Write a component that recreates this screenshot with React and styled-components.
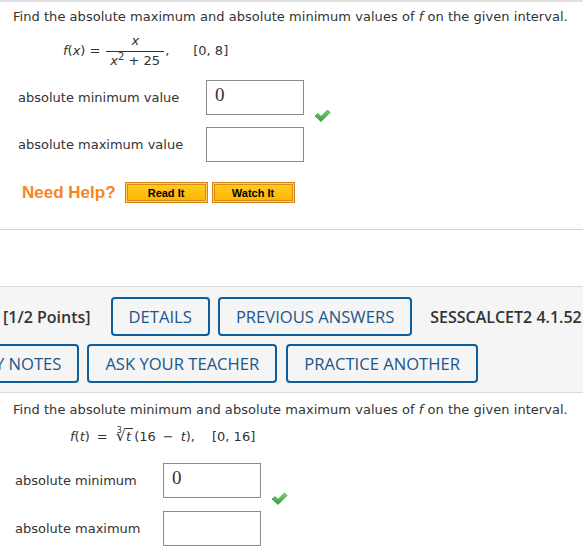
import React from "react";
import styled, { createGlobalStyle } from "styled-components";

const GlobalStyle = createGlobalStyle`
  html, body {
    margin: 0;
    padding: 0;
    background: #fff;
    overflow: hidden;
  }
  body {
    font-family: "DejaVu Sans", Verdana, sans-serif;
    color: #333;
  }
`;

const Page = styled.div`
  width: 583px;
  height: 551px;
  overflow: hidden;
  border-top: 2px solid #e2e2e2;
  box-sizing: border-box;
`;

const Question = styled.section`
  padding: ${(p) => p.pad};
  font-size: 13px;
  line-height: 16px;
  color: #333;
`;

const Prompt = styled.p`
  margin: 0;
  white-space: nowrap;
  letter-spacing: 0.04px;
`;

const Var = styled.i`
  font-family: "DejaVu Sans", Verdana, sans-serif;
  font-style: italic;
`;

const Formula = styled.div`
  margin: ${(p) => p.margin};
  white-space: pre;
  height: ${(p) => p.h}px;
`;

const Op = styled.span`
  padding: 0 ${(p) => p.space}px;
`;

const Fraction = styled.span`
  display: inline-flex;
  flex-direction: column;
  align-items: center;
  vertical-align: middle;
  margin: 0 1px 0 2px;
`;

const Numer = styled.span`
  padding: 0 4px 2px;
  border-bottom: 1px solid #333;
  align-self: stretch;
  text-align: center;
`;

const Denom = styled.span`
  padding: 1px 4px 0;
`;

const Sup = styled.sup`
  font-size: 10px;
  line-height: 0;
`;

const Interval = styled.span`
  margin-left: ${(p) => p.gap}px;
`;

const RootIndex = styled.span`
  font-size: 8px;
  line-height: 0;
  vertical-align: 8px;
  margin: 0 -6px 0 2px;
`;

const Radical = styled.span`
  font-size: 16px;
`;

const Radicand = styled.span`
  display: inline-block;
  border-top: 1px solid #333;
  line-height: 13px;
  padding: 1px 2px 0 1px;
  margin: 0 1px 0 -1px;
`;

const AnswerRow = styled.div`
  display: flex;
  align-items: center;
  margin-top: ${(p) => p.top}px;
  padding-left: ${(p) => p.indent}px;
`;

const Label = styled.label`
  width: ${(p) => p.width}px;
  flex: none;
`;

const AnswerBox = styled.div`
  width: 98px;
  height: 35px;
  box-sizing: border-box;
  border: 1px solid #8a8a8a;
  font-family: "Liberation Serif", "Times New Roman", serif;
  font-size: 19px;
  color: #333;
  padding: 6px 0 0 8px;
`;

const Check = styled.svg`
  align-self: flex-end;
  margin: 0 0 -7px 10px;
`;

const HelpRow = styled.div`
  display: flex;
  align-items: center;
  margin: 20px 0 0 9px;
`;

const HelpTitle = styled.span`
  font-family: "Liberation Sans", Arial, sans-serif;
  font-weight: bold;
  font-size: 17px;
  color: #f7861e;
  margin-right: 9px;
`;

const HelpButton = styled.button`
  width: 83px;
  height: 21px;
  margin-right: 4px;
  padding: 0;
  border: 1px solid #d98410;
  box-shadow: inset 0 0 0 1px #ffd25a, inset 0 0 0 2px #d68e1a;
  background: linear-gradient(#ffcc22, #ffb400);
  font-family: "Liberation Sans", Arial, sans-serif;
  font-weight: bold;
  font-size: 11px;
  color: #000;
`;

const Divider = styled.hr`
  margin: ${(p) => p.top}px 0 0;
  border: 0;
  border-top: 1px solid #d2d2d2;
`;

const Toolbar = styled.div`
  margin-top: 56px;
  background: #f5f5f5;
  border-top: 1px solid #dadada;
  border-bottom: 1px solid #dadada;
  padding: 10px 0 9px;
  display: flex;
  flex-direction: column;
  gap: 8px;
  font-family: "Open Sans", "Noto Sans", sans-serif;
`;

const ToolRow = styled.div`
  display: flex;
  align-items: center;
  margin-left: ${(p) => p.shift}px;
  white-space: nowrap;
`;

const Meta = styled.span`
  font-weight: 600;
  font-size: 16px;
  color: #333;
  margin: 0 ${(p) => p.after}px 0 0;
`;

const ToolButton = styled.button`
  height: ${(p) => p.h}px;
  padding: 0 16px;
  margin-right: ${(p) => p.after}px;
  background: transparent;
  border: 2px solid #0f5e9c;
  border-radius: 4px;
  font-family: "Open Sans", "Noto Sans", sans-serif;
  font-size: 16.6px;
  color: #22558a;
  white-space: nowrap;
`;

const CheckMark = () => (
  <Check width="17" height="13" viewBox="0 0 17 13">
    <defs>
      <linearGradient id="ck" x1="0" y1="0" x2="0" y2="1">
        <stop offset="0" stopColor="#7fd36b" />
        <stop offset="1" stopColor="#2f9e3a" />
      </linearGradient>
    </defs>
    <path
      d="M1 7 L4 4.5 L7 7.5 L13.5 1 L16 3.5 L7 12.5 Z"
      fill="url(#ck)"
      stroke="#3a9a3a"
      strokeWidth="0.8"
      strokeLinejoin="round"
    />
  </Check>
);

export default function App() {
  return (
    <Page>
      <GlobalStyle />
      <Question pad="7px 13px 0">
        <Prompt>
          Find the absolute maximum and absolute minimum values of <Var>f</Var> on the
          given interval.
        </Prompt>
        <Formula margin="8px 0 0 50px">
          <Var>f</Var>(<Var>x</Var>)<Op space={4}>=</Op>
          <Fraction>
            <Numer>
              <Var>x</Var>
            </Numer>
            <Denom>
              <Var>x</Var>
              <Sup>2</Sup> + 25
            </Denom>
          </Fraction>
          ,<Interval gap={24}>[0, 8]</Interval>
        </Formula>
        <AnswerRow top={11} indent={5}>
          <Label width={188}>absolute minimum value</Label>
          <AnswerBox>0</AnswerBox>
          <CheckMark />
        </AnswerRow>
        <AnswerRow top={12} indent={5}>
          <Label width={188}>absolute maximum value</Label>
          <AnswerBox />
        </AnswerRow>
        <HelpRow>
          <HelpTitle>Need Help?</HelpTitle>
          <HelpButton>Read It</HelpButton>
          <HelpButton>Watch It</HelpButton>
        </HelpRow>
      </Question>
      <Divider top={26} />
      <Toolbar>
        <ToolRow shift={3}>
          <Meta after={20}>[1/2 Points]</Meta>
          <ToolButton h={39} after={8}>DETAILS</ToolButton>
          <ToolButton h={39} after={18}>PREVIOUS ANSWERS</ToolButton>
          <Meta after={0}>SESSCALCET2 4.1.52</Meta>
        </ToolRow>
        <ToolRow shift={-38}>
          <ToolButton h={39} after={8}>MY NOTES</ToolButton>
          <ToolButton h={39} after={9}>ASK YOUR TEACHER</ToolButton>
          <ToolButton h={39} after={0}>PRACTICE ANOTHER</ToolButton>
        </ToolRow>
      </Toolbar>
      <Question pad="9px 13px 0">
        <Prompt>
          Find the absolute minimum and absolute maximum values of <Var>f</Var> on the
          given interval.
        </Prompt>
        <Formula margin="10px 0 0 57px" h={18}>
          <Var>f</Var>(<Var>t</Var>)<Op space={7}>=</Op>
          <RootIndex>3</RootIndex>
          <Radical>√</Radical>
          <Radicand>
            <Var>t</Var>
          </Radicand>
          (16<Op space={7}>−</Op>
          <Var>t</Var>),<Interval gap={17}>[0, 16]</Interval>
        </Formula>
        <AnswerRow top={17} indent={2}>
          <Label width={148}>absolute minimum</Label>
          <AnswerBox>0</AnswerBox>
          <CheckMark />
        </AnswerRow>
        <AnswerRow top={13} indent={2}>
          <Label width={148}>absolute maximum</Label>
          <AnswerBox />
        </AnswerRow>
      </Question>
    </Page>
  );
}
